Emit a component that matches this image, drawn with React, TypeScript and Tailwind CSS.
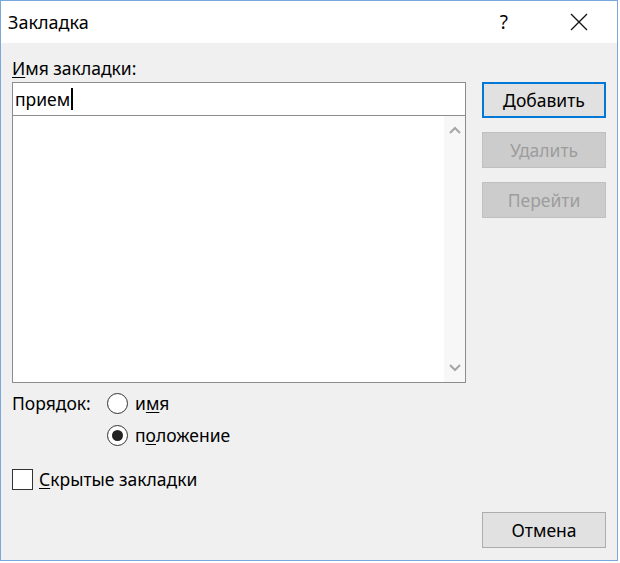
import React from "react";

const font = { fontFamily: '"Noto Sans", "Open Sans", sans-serif' };

function Radio({ checked }: { checked?: boolean }) {
  return (
    <span className="flex h-[21px] w-[21px] items-center justify-center rounded-full border border-[#333333] bg-white">
      {checked && <span className="h-[11px] w-[11px] rounded-full bg-[#222222]" />}
    </span>
  );
}

function Chevron({ up }: { up?: boolean }) {
  return (
    <svg width="12" height="8" viewBox="0 0 12 8" className="text-[#a6a6a6]">
      <path
        d={up ? "M1 7 L6 2 L11 7" : "M1 1 L6 6 L11 1"}
        fill="none"
        stroke="currentColor"
        strokeWidth="2"
      />
    </svg>
  );
}

export default function App() {
  return (
    <div className="h-[563px] w-[620px] bg-white" style={font}>
      <div className="flex h-[561px] w-[618px] flex-col border border-[#7aa7de] bg-[#f0f0f0] text-black">
        {/* Title bar */}
        <div className="flex h-[42px] items-center bg-white pl-[7px] text-[18px]">
          <span className="flex-1">Закладка</span>
          <span className="mr-[62px] text-[19px]">?</span>
          <svg width="18" height="18" viewBox="0 0 18 18" className="mr-[29px]">
            <path d="M1 1 L17 17 M17 1 L1 17" stroke="#111" strokeWidth="1.3" />
          </svg>
        </div>

        {/* Body */}
        <div className="flex flex-1 gap-[16px] pb-[12px] pl-[11px] pt-[14px] text-[17.5px]">
          <div className="flex w-[454px] flex-col">
            <div className="h-[22px] leading-[22px]">
              <span className="underline underline-offset-2">И</span>мя закладки:
            </div>
            <div className="mt-[3px] flex h-[34px] items-center border border-[#8c8c8c] bg-white pl-[2px]">
              прием
              <span className="ml-[1px] h-[22px] w-[2px] bg-black" />
            </div>
            <div className="flex h-[267px] border border-t-0 border-[#8c8c8c] bg-white">
              <div className="flex-1" />
              <div className="flex w-[21px] flex-col items-center justify-between bg-[#f7f7f7] py-[10px]">
                <Chevron up />
                <Chevron />
              </div>
            </div>

            <div className="mt-[9px] flex h-[22px] items-center">
              <span className="w-[95px]">Порядок:</span>
              <Radio />
              <span className="ml-[7px]">
                и<span className="underline underline-offset-2">м</span>я
              </span>
            </div>
            <div className="mt-[10px] flex h-[22px] items-center pl-[95px]">
              <Radio checked />
              <span className="ml-[7px]">
                п<span className="underline underline-offset-2">о</span>ложение
              </span>
            </div>

            <div className="mt-[22px] flex h-[22px] items-center">
              <span className="h-[21px] w-[21px] border border-[#333333] bg-white" />
              <span className="ml-[6px]">
                <span className="underline underline-offset-2">С</span>крытые закладки
              </span>
            </div>
          </div>

          <div className="mt-[25px] flex w-[124px] flex-col gap-[14px]">
            <button className="h-[36px] border-2 border-[#0078d7] bg-[#e1e1e1]">
              <span className="underline underline-offset-2">Д</span>обавить
            </button>
            <button className="h-[36px] border border-[#bfbfbf] bg-[#cccccc] text-[#9d9d9d]">
              Удалить
            </button>
            <button className="h-[36px] border border-[#bfbfbf] bg-[#cccccc] text-[#9d9d9d]">
              Перейти
            </button>
            <button className="mt-auto h-[36px] border border-[#adadad] bg-[#e1e1e1]">
              Отмена
            </button>
          </div>
        </div>
      </div>
    </div>
  );
}
